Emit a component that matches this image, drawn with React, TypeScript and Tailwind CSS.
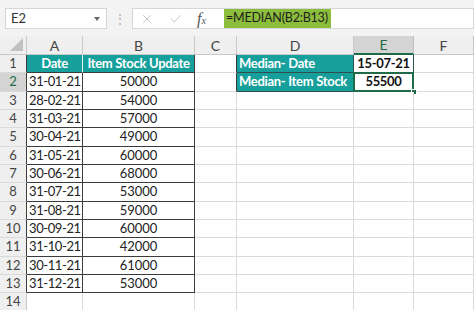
import { X, Check } from 'lucide-react'

const rows: [string, string][] = [
  ['31-01-21', '50000'],
  ['28-02-21', '54000'],
  ['31-03-21', '57000'],
  ['30-04-21', '49000'],
  ['31-05-21', '60000'],
  ['30-06-21', '68000'],
  ['31-07-21', '53000'],
  ['31-08-21', '59000'],
  ['30-09-21', '60000'],
  ['31-10-21', '42000'],
  ['30-11-21', '61000'],
  ['31-12-21', '53000'],
]

const cols = ['A', 'B', 'C', 'D', 'E', 'F']

function RowCells({ r }: { r: number }) {
  const inTable = r <= 13
  const teal = 'bg-[#17a09b] text-white font-bold'
  const data = r >= 2 && r <= 13 ? rows[r - 2] : null
  return (
    <>
      <div className={`h-[18.33px] flex items-center justify-center text-[13px] border-b border-[#dadada] border-r ${inTable ? 'border-r-[#3c3c3c]' : 'border-r-[#c8c8c8]'} ${r === 2 ? 'bg-[#d4d4d4] text-[#1e6b45]' : 'bg-[#efefef] text-[#444]'}`}>{r}</div>
      {/* A */}
      <div className={`h-[18.33px] flex items-center whitespace-nowrap overflow-hidden text-[13px] tracking-[-0.4px] border-r border-b ${r === 1 ? `${teal} justify-center border-r-[#e8f4f3] border-b-[#3c3c3c]` : inTable ? 'px-[2px] text-[#222] border-[#3c3c3c]' : 'border-[#dadada]'}`}>
        {r === 1 ? 'Date' : data?.[0]}
      </div>
      {/* B */}
      <div className={`h-[18.33px] flex items-center justify-center whitespace-nowrap text-[13px] border-r border-b ${r === 1 ? `${teal} tracking-[-0.3px] border-[#3c3c3c]` : inTable ? 'text-[#222] border-[#3c3c3c]' : 'border-[#dadada]'}`}>
        {r === 1 ? 'Item Stock Update' : data?.[1]}
      </div>
      {/* C */}
      <div className={`h-[18.33px] bg-white border-b border-[#dadada] border-r ${r <= 2 ? 'border-r-[#3c3c3c]' : ''}`} />
      {/* D */}
      <div className={`h-[18.33px] flex items-center whitespace-nowrap overflow-hidden pl-[2px] text-[13px] tracking-[-0.3px] border-r border-b ${r <= 2 ? `${teal} border-[#2f4f4e]` : 'bg-white border-[#dadada]'}`}>
        {r === 1 ? 'Median- Date' : r === 2 ? 'Median- Item Stock' : ''}
      </div>
      {/* E */}
      <div className={`relative h-[18.33px] flex items-center justify-center whitespace-nowrap text-[13px] bg-white border-r border-b ${r <= 2 ? 'font-bold text-[#111] tracking-[-0.3px] border-[#2f4f4e]' : 'border-[#dadada]'}`}>
        {r === 1 ? '15-07-21' : r === 2 ? '55500' : ''}
        {r === 2 && (
          <>
            <div className="absolute -left-[1px] -top-[1px] -right-[1px] -bottom-[1px] border-2 border-[#1f6b48]" />
            <div className="absolute -right-[4px] -bottom-[4px] w-[6px] h-[6px] bg-[#1f6b48] border border-white" />
          </>
        )}
      </div>
      {/* F */}
      <div className="h-[18.33px] bg-white border-r border-b border-[#dadada]" />
    </>
  )
}

export default function App() {
  return (
    <div className="w-[474px] h-[310px] overflow-hidden bg-[#f3f3f3] font-['Lato',sans-serif]">
      <div className="h-[36px] flex items-start pt-[8px]">
        <div className="ml-[5px] w-[102px] h-[21px] bg-white border border-[#d6d6d6] flex items-center justify-between pl-[5px] pr-[6px] text-[13px] text-[#333]">
          <span>E2</span>
          <span className="w-0 h-0 border-l-[3.5px] border-r-[3.5px] border-t-[4px] border-l-transparent border-r-transparent border-t-[#666]" />
        </div>
        <div className="w-[25px] h-[21px] flex items-center justify-center text-[#aaa] text-[12px]">⋮</div>
        <div className="flex-1 h-[21px] bg-white border border-[#d6d6d6] flex items-stretch">
          <div className="w-[88px] flex items-center text-[#b4b4b4]">
            <X size={14} strokeWidth={1.4} className="ml-[7px]" />
            <Check size={14} strokeWidth={1.4} className="ml-[15px]" />
            <span className="ml-[14px] font-['Liberation_Serif',serif] italic text-[#555] text-[16px] leading-none">f<span className="text-[10px]">x</span></span>
          </div>
          <div className="ml-[3px] w-[107px] bg-[#8cbd3c] flex items-center pl-[2px] text-[12.5px] tracking-[-0.2px] text-[#1d1d1d]">=MEDIAN(B2:B13)</div>
        </div>
      </div>
      <div className="grid grid-cols-[27px_56px_112px_42px_117px_60px_60px] bg-white">
        <div className="relative h-[19px] bg-[#efefef] border-r border-b border-[#c8c8c8]">
          <svg width="13" height="13" viewBox="0 0 13 13" className="absolute right-[3px] bottom-[3px]">
            <polygon points="13,0 13,13 0,13" fill="#c2c2c2" />
          </svg>
        </div>
        {cols.map(c => (
          <div key={c} className={`h-[19px] flex items-center justify-center text-[14px] border-r ${c === 'E' ? 'bg-[#d4d4d4] text-[#1e6b45] border-b-2 border-b-[#1f6b48] border-r-[#c0c0c0]' : 'bg-[#efefef] text-[#444] border-b border-[#c8c8c8]'}`}>{c}</div>
        ))}
        {Array.from({ length: 14 }).map((_, i) => (
          <RowCells key={i} r={i + 1} />
        ))}
      </div>
    </div>
  )
}
